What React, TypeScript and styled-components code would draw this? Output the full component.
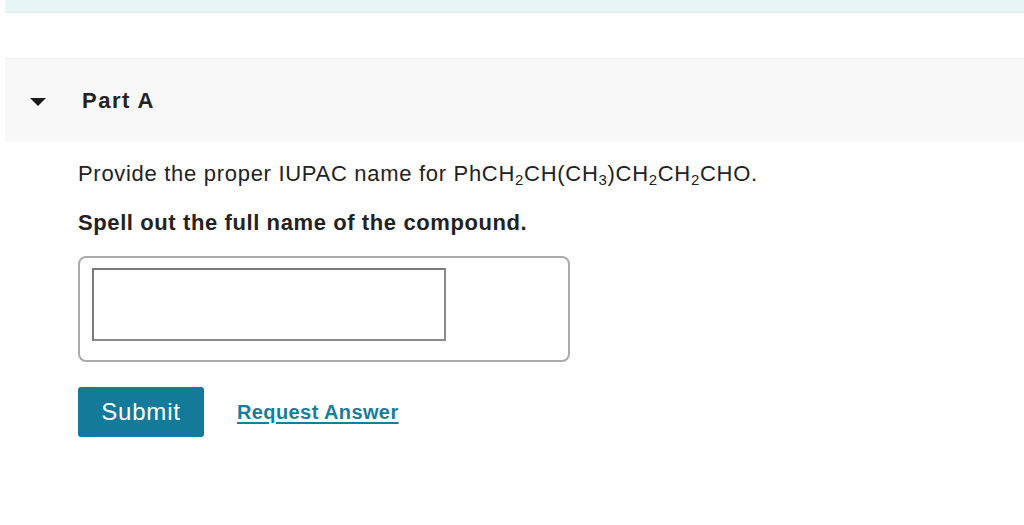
import React from "react";
import styled, { createGlobalStyle } from "styled-components";

const Global = createGlobalStyle`
  html, body { margin: 0; padding: 0; background: #fff; }
  body { font-family: "Liberation Sans", Arial, Helvetica, sans-serif; color: #222; }
`;

const Page = styled.div`
  width: 1024px;
  height: 525px;
  overflow: hidden;
  padding-left: 5px;
  box-sizing: border-box;
`;

const TopBand = styled.div`
  height: 12px;
  background: #e6f6f6;
  border-bottom: 1px solid #dcefef;
`;

const PartHeader = styled.div`
  margin-top: 45px;
  height: 83px;
  background: #f8f8f8;
  border-top: 1px solid #f1f1f1;
  display: flex;
  align-items: center;
  padding-left: 25px;
  gap: 36px;
`;

const Caret = styled.span`
  width: 0;
  height: 0;
  border-left: 8px solid transparent;
  border-right: 8px solid transparent;
  border-top: 8px solid #1a1a1a;
  margin-top: 2px;
`;

const PartTitle = styled.h2`
  margin: 0;
  font-size: 22px;
  letter-spacing: 1.5px;
  font-weight: 700;
  color: #222;
`;

const Body = styled.div`
  padding-left: 73px;
  padding-top: 17px;
  display: flex;
  flex-direction: column;
`;

const Prompt = styled.p`
  margin: 0;
  font-size: 22px;
  letter-spacing: 0.7px;
  line-height: 30px;
  color: #222;
  sub {
    font-size: 15px;
    line-height: 0;
    vertical-align: -4px;
  }
`;

const Instruction = styled.p`
  margin: 19px 0 0;
  font-size: 22px;
  letter-spacing: 0.6px;
  line-height: 30px;
  font-weight: 700;
  color: #222;
`;

const AnswerBox = styled.div`
  margin-top: 18px;
  width: 492px;
  height: 106px;
  box-sizing: border-box;
  border: 2px solid #ababab;
  border-radius: 8px;
  padding: 10px 12px;
`;

const AnswerInput = styled.input`
  display: block;
  width: 354px;
  height: 73px;
  box-sizing: border-box;
  border: 2px solid #8a8a8a;
  border-top-color: #7a7a7a;
  border-left-color: #7a7a7a;
  background: #fff;
  font-size: 20px;
  padding: 4px 8px;
  outline: none;
`;

const Actions = styled.div`
  margin-top: 25px;
  display: flex;
  align-items: center;
  gap: 33px;
`;

const SubmitButton = styled.button`
  width: 126px;
  height: 50px;
  background: #137b99;
  color: #fff;
  border: none;
  border-radius: 3px;
  font-family: "Liberation Sans", Arial, sans-serif;
  font-size: 24px;
  letter-spacing: 0.8px;
  cursor: pointer;
`;

const RequestLink = styled.a`
  color: #187d9c;
  font-size: 20px;
  letter-spacing: 0.4px;
  font-weight: 700;
  text-decoration: underline;
  text-underline-offset: 3px;
  cursor: pointer;
`;

export default function App() {
  return (
    <Page>
      <Global />
      <TopBand />
      <PartHeader>
        <Caret />
        <PartTitle>Part A</PartTitle>
      </PartHeader>
      <Body>
        <Prompt>
          Provide the proper IUPAC name for PhCH<sub>2</sub>CH(CH<sub>3</sub>)CH<sub>2</sub>CH<sub>2</sub>CHO.
        </Prompt>
        <Instruction>Spell out the full name of the compound.</Instruction>
        <AnswerBox>
          <AnswerInput type="text" aria-label="answer" />
        </AnswerBox>
        <Actions>
          <SubmitButton>Submit</SubmitButton>
          <RequestLink>Request Answer</RequestLink>
        </Actions>
      </Body>
    </Page>
  );
}
